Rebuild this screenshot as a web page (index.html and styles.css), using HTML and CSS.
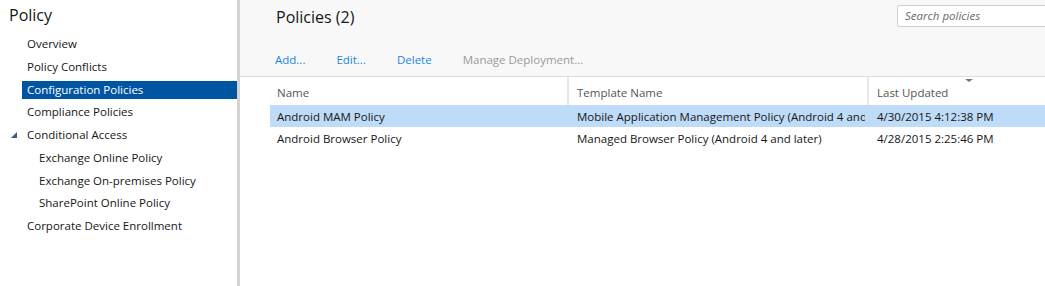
FILE: index.html
```html
<!DOCTYPE html>
<html lang="en">
<head>
    <meta charset="UTF-8">
    <title>Policy</title>
    <link rel="stylesheet" href="styles.css">
</head>
<body>

    <div class="console">
        <!-- Left navigation -->
        <div class="sidebar">
            <div class="sidebar-title">Policy</div>
            <ul class="nav">
                <li class="nav-item">Overview</li>
                <li class="nav-item">Policy Conflicts</li>
                <li class="nav-item selected">Configuration Policies</li>
                <li class="nav-item">Compliance Policies</li>
                <li class="nav-item group">
                    <svg class="expander" width="6" height="6" viewBox="0 0 6 6"><polygon points="6,0 6,6 0,6"/></svg>
                    Conditional Access
                </li>
                <li class="nav-item sub">Exchange Online Policy</li>
                <li class="nav-item sub">Exchange On-premises Policy</li>
                <li class="nav-item sub">SharePoint Online Policy</li>
                <li class="nav-item">Corporate Device Enrollment</li>
            </ul>
        </div>

        <!-- Main content -->
        <div class="main">
            <div class="main-header">
                <div class="title-row">
                    <div class="main-title">Policies (2)</div>
                    <div class="search-box">Search policies</div>
                </div>
                <div class="toolbar">
                    <span class="action">Add...</span>
                    <span class="action">Edit...</span>
                    <span class="action">Delete</span>
                    <span class="action disabled">Manage Deployment...</span>
                </div>
            </div>

            <div class="grid">
                <div class="grid-head">
                    <div class="col col-name">Name</div>
                    <div class="col col-template">Template Name</div>
                    <div class="col col-updated">
                        Last Updated
                        <span class="sort-arrow"></span>
                    </div>
                </div>
                <div class="grid-row selected">
                    <div class="col col-name">Android MAM Policy</div>
                    <div class="col col-template"><span class="clip">Mobile Application Management Policy (Android 4 and later)</span></div>
                    <div class="col col-updated">4/30/2015 4:12:38 PM</div>
                </div>
                <div class="grid-row">
                    <div class="col col-name">Android Browser Policy</div>
                    <div class="col col-template">Managed Browser Policy (Android 4 and later)</div>
                    <div class="col col-updated">4/28/2015 2:25:46 PM</div>
                </div>
            </div>
        </div>
    </div>

</body>
</html>
```

FILE: styles.css
```css
/* General Styles */
body {
    font-family: 'Open Sans', 'Noto Sans', sans-serif;
    font-size: 11.5px;
    margin: 0;
    padding: 0;
    background-color: #fff;
    color: #161616;
}

.console {
    display: flex;
    height: 286px;
    overflow: hidden;
}

/* Sidebar */
.sidebar {
    width: 237px;
    flex-shrink: 0;
    border-right: 3px solid #d4d4d4;
}

.sidebar-title {
    font-size: 16px;
    line-height: 20px;
    padding: 5px 0 0 9px;
    height: 30px;
}

.nav {
    list-style: none;
    margin: 0;
    padding: 0;
}

.nav-item {
    position: relative;
    height: 18px;
    line-height: 18px;
    margin: 0 0 4.75px 22px;
    padding-left: 5px;
    white-space: nowrap;
}

.nav-item.selected {
    background-color: #0055a2;
    color: #fff;
}

.nav-item.sub {
    padding-left: 17px;
}

/* Tree expander triangle */
.expander {
    position: absolute;
    left: -11px;
    top: 6px;
    fill: #3b5b7a;
}

/* Main area */
.main {
    flex: 1;
    display: flex;
    flex-direction: column;
    min-width: 0;
}

.main-header {
    height: 77px;
    background-color: #f8f8f8;
    border-bottom: 1px solid #dcdce6;
    box-sizing: border-box;
}

.title-row {
    display: flex;
    justify-content: space-between;
    align-items: flex-start;
    padding: 5px 0 0 36px;
}

.main-title {
    font-size: 16px;
    line-height: 24px;
}

.search-box {
    width: 160px;
    height: 22px;
    box-sizing: border-box;
    margin-right: -12px;
    border: 1px solid #cfcfcf;
    border-radius: 2px;
    background-color: #fff;
    padding-left: 7px;
    line-height: 20px;
    font-style: italic;
    color: #6a6a6a;
}

.toolbar {
    display: flex;
    padding: 22px 0 0 35px;
    line-height: 18px;
}

.action {
    color: #1a86e2;
    margin-right: 31px;
}

.action.disabled {
    color: #9a9a9a;
}

/* Policies grid */
.grid {
    padding-left: 30px;
}

.grid-head,
.grid-row {
    display: grid;
    grid-template-columns: 297px 300px 1fr;
}

.grid-head {
    height: 28px;
    line-height: 31px;
    color: #555;
}

.grid-row {
    height: 22px;
    line-height: 23px;
}

.grid-row.selected {
    background-color: #bedcf8;
}

.col {
    white-space: nowrap;
    overflow: hidden;
    padding-left: 7px;
}

.col-template,
.col-updated {
    padding-left: 10px;
}

/* long template names are cut at the column edge */
.clip {
    display: block;
    width: 288px;
    overflow: hidden;
}

.grid-head .col-template,
.grid-head .col-updated {
    position: relative;
    border-left: 2px solid #e4e9ef;
    padding-left: 8px;
}

.sort-arrow {
    position: absolute;
    left: 96px;
    top: 2px;
    border-left: 4px solid transparent;
    border-right: 4px solid transparent;
    border-top: 3px solid #777;
}
```
